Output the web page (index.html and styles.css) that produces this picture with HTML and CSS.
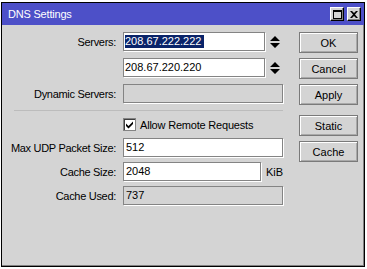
FILE: index.html
```html
<!DOCTYPE html>
<html lang="en">
<head>
    <meta charset="UTF-8">
    <title>DNS Settings</title>
    <link rel="stylesheet" href="styles.css">
</head>
<body>
    <div class="window">
        <div class="titlebar">
            <span class="title">DNS Settings</span>
            <span class="tb-btns">
                <span class="tb-btn">
                    <svg width="9" height="9" viewBox="0 0 9 9"><rect x="0.5" y="0.5" width="8" height="8" fill="none" stroke="#000"/><rect x="0" y="0" width="9" height="2" fill="#000"/></svg>
                </span>
                <span class="tb-btn">
                    <svg width="8" height="7" viewBox="0 0 8 7"><path d="M0 0h2l2 2 2-2h2L5 3.5 8 7H6L4 5 2 7H0l3-3.5z" fill="#000"/></svg>
                </span>
            </span>
        </div>

        <div class="content">
            <div class="form">
                <div class="row">
                    <span class="lbl">Servers:</span>
                    <div class="field server"><span class="sel">208.67.222.222</span></div>
                    <svg class="spin" width="10" height="12" viewBox="0 0 10 12"><path d="M0 5L5 0L10 5Z M0 7H10L5 12Z" fill="#000"/></svg>
                </div>
                <div class="row">
                    <span class="lbl"></span>
                    <div class="field server">208.67.220.220</div>
                    <svg class="spin" width="10" height="12" viewBox="0 0 10 12"><path d="M0 5L5 0L10 5Z M0 7H10L5 12Z" fill="#000"/></svg>
                </div>
                <div class="row">
                    <span class="lbl">Dynamic Servers:</span>
                    <div class="field wide disabled"></div>
                </div>

                <div class="separator"></div>

                <div class="row check-row">
                    <span class="lbl"></span>
                    <span class="checkbox">
                        <svg width="9" height="9" viewBox="0 0 9 9"><path d="M1 3.5L3.5 6L8 1.5V4L3.5 8.5L1 6Z" fill="#000"/></svg>
                    </span>
                    <span class="check-text">Allow Remote Requests</span>
                </div>
                <div class="row tight">
                    <span class="lbl">Max UDP Packet Size:</span>
                    <div class="field wide">512</div>
                </div>
                <div class="row tight">
                    <span class="lbl">Cache Size:</span>
                    <div class="field cache">2048</div>
                    <span class="unit">KiB</span>
                </div>
                <div class="row tight">
                    <span class="lbl">Cache Used:</span>
                    <div class="field wide disabled">737</div>
                </div>
            </div>

            <div class="buttons">
                <button class="btn">OK</button>
                <button class="btn">Cancel</button>
                <button class="btn">Apply</button>
                <button class="btn spaced">Static</button>
                <button class="btn">Cache</button>
            </div>
        </div>
    </div>
</body>
</html>
```

FILE: styles.css
```css
body {
    margin: 0;
    background: #fff;
    font-family: "Liberation Sans", Arial, sans-serif;
    font-size: 11px;
    color: #000;
}
.window {
    margin: 2px 0 0 1px;
    width: 364px;
    height: 265px;
    box-sizing: border-box;
    border: 1px solid #000;
    background: #d4d4d4;
    box-shadow: inset -1px -1px 0 #808080;
}
.titlebar {
    height: 22px;
    background: #4d50c8;
    display: flex;
    align-items: center;
    justify-content: space-between;
    padding: 0 3px 0 6px;
}
.title {
    color: #fff;
    font-size: 11px;
    letter-spacing: -0.2px;
}
.tb-btns {
    display: flex;
    gap: 3px;
}
.tb-btn {
    width: 14px;
    height: 14px;
    box-sizing: border-box;
    background: #d4d4d4;
    border: 1px solid;
    border-color: #fff #000 #000 #fff;
    box-shadow: inset -1px -1px 0 #808080;
    display: flex;
    align-items: center;
    justify-content: center;
}
.content {
    display: flex;
    gap: 16px;
    padding: 7px 7px 0 2px;
}
.form {
    width: 279px;
}
.row {
    display: flex;
    align-items: center;
    height: 19px;
    margin-bottom: 7px;
}
.row.tight {
    margin-bottom: 5px;
}
.lbl {
    width: 112px;
    margin-right: 7px;
    text-align: right;
    letter-spacing: -0.3px;
    flex-shrink: 0;
}
.field {
    height: 19px;
    box-sizing: border-box;
    background: #fff;
    border: 1px solid #848484;
    box-shadow: 1px 1px 0 #fff;
    padding: 0 2px;
    line-height: 17px;
    white-space: nowrap;
}
.field.server {
    width: 142px;
    padding-left: 1px;
}
.field.wide {
    width: 160px;
}
.field.cache {
    width: 140px;
}
.field.disabled {
    background: #d4d4d4;
}
.sel {
    display: inline-block;
    background: #0a246a;
    color: #fff;
    line-height: 13px;
    padding-right: 3px;
}
.spin {
    margin-left: 5px;
}
.unit {
    margin-left: 5px;
}
.separator {
    margin: 1px 0 7px 10px;
    border-top: 1px solid #bcbcbc;
}
.check-row {
    height: 13px;
    margin-bottom: 7px;
}
.checkbox {
    width: 13px;
    height: 13px;
    box-sizing: border-box;
    background: #fff;
    border: 1px solid #848484;
    box-shadow: inset 1px 1px 0 #404040;
    display: flex;
    align-items: center;
    justify-content: center;
}
.check-text {
    margin-left: 4px;
    letter-spacing: -0.2px;
}
.buttons {
    display: flex;
    flex-direction: column;
    gap: 5px;
}
.btn {
    width: 59px;
    height: 21px;
    margin: 0;
    padding: 0;
    font-family: inherit;
    font-size: 11px;
    color: #000;
    background: #d4d4d4;
    border: 1px solid #7a7a7a;
    box-shadow: inset 1px 1px 0 #fff, inset -1px -1px 0 #a9a9a9;
}
.btn.spaced {
    margin-top: 5px;
}
```
